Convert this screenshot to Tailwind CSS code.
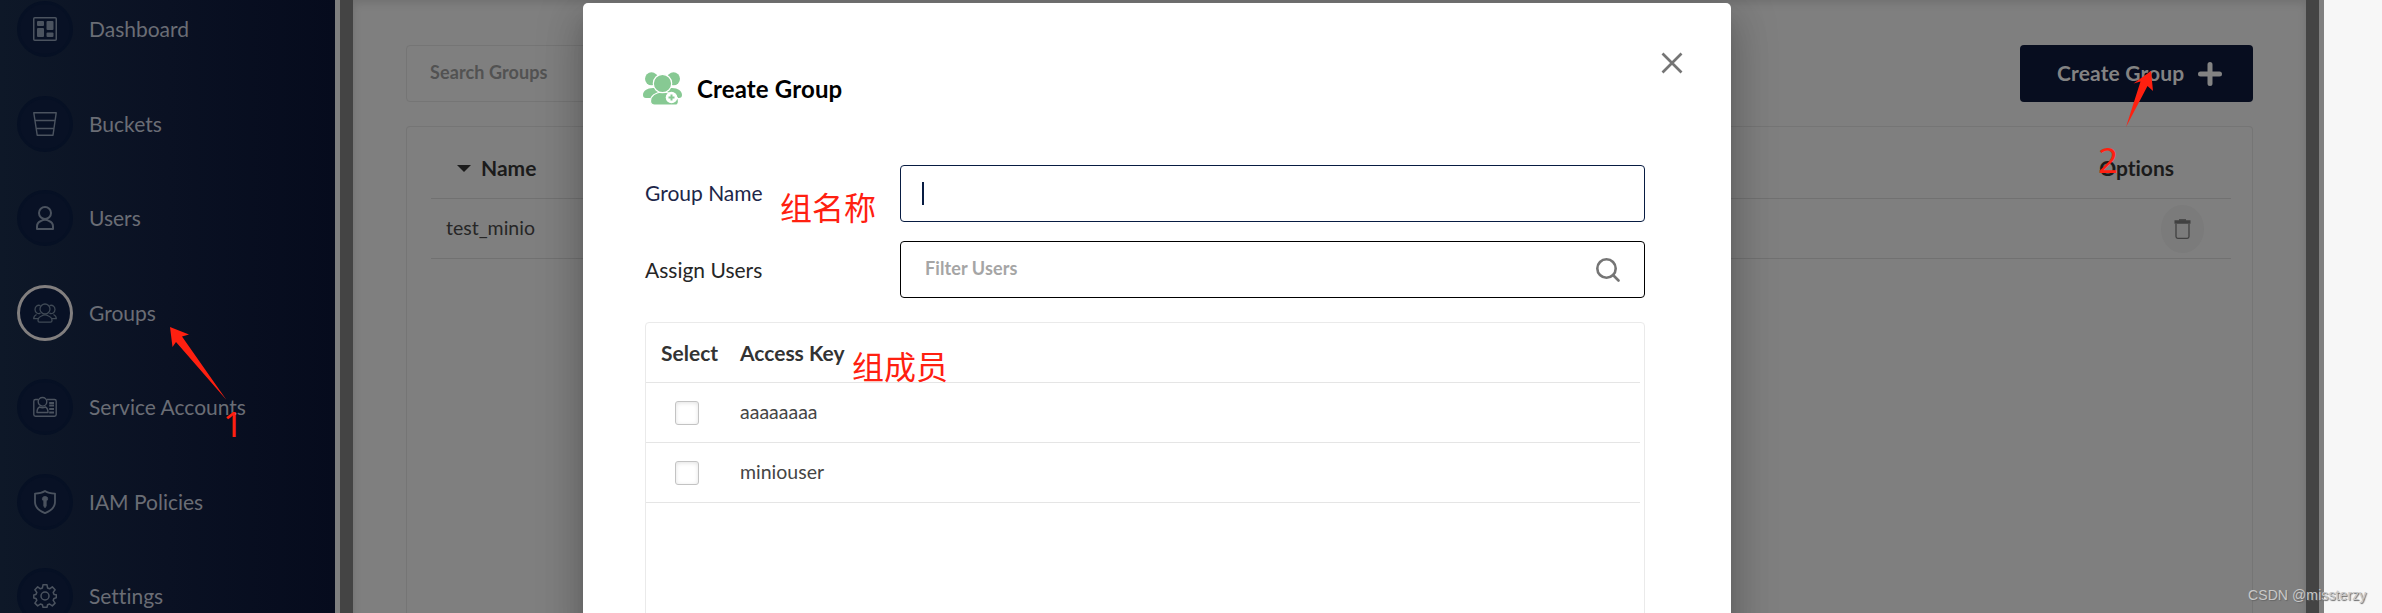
<!DOCTYPE html>
<html lang="en">
<head>
    <meta charset="UTF-8" />
    <title>MinIO Console - Groups</title>
    <script src="https://cdn.jsdelivr.net/npm/@tailwindcss/browser@4"></script>
</head>
<body class="relative flex h-[613px] w-[2382px] overflow-hidden bg-[#f7f7f7] font-['Lato',sans-serif] [font-variant-ligatures:none]">

<!-- Sidebar -->
<nav class="flex w-[335px] shrink-0 flex-col gap-[38.5px] bg-linear-to-r from-[#0e1828] via-[#0a1123] to-[#060b1d] pt-px pl-[17px] text-[21px] text-[#6a6d75]">
    <a class="flex shrink-0 items-center gap-4">
        <span class="flex size-14 items-center justify-center rounded-full border-[3px] border-[#061024] bg-[#081125] text-[#4b535f]">
            <svg class="size-6" viewBox="0 0 24 24" fill="none" stroke="currentColor" stroke-width="1.5">
                <rect x=".75" y=".75" width="22.5" height="22.5" rx="1" />
                <g fill="currentColor" stroke="none">
                    <rect x="4" y="4" width="7" height="5" rx="1" />
                    <rect x="4" y="11" width="7" height="9" rx="1" />
                    <rect x="13.5" y="4" width="7" height="9" rx="1" />
                    <rect x="13.5" y="15.5" width="7" height="4.5" rx="1" />
                </g>
            </svg>
        </span>
        <span>Dashboard</span>
    </a>
    <a class="flex shrink-0 items-center gap-4">
        <span class="flex size-14 items-center justify-center rounded-full border-[3px] border-[#061024] bg-[#081125] text-[#4b535f]">
            <svg class="size-6" viewBox="0 0 24 24" fill="none" stroke="currentColor" stroke-width="1.4" stroke-linejoin="round">
                <path d="M.8.8h22.4L20 23.2H4.2zM2 8.5h20M3 16.5h18" />
            </svg>
        </span>
        <span>Buckets</span>
    </a>
    <a class="flex shrink-0 items-center gap-4">
        <span class="flex size-14 items-center justify-center rounded-full border-[3px] border-[#061024] bg-[#081125] text-[#4b535f]">
            <svg class="size-6" viewBox="0 0 24 24" fill="none" stroke="currentColor" stroke-width="2" stroke-linejoin="round">
                <circle cx="12" cy="7" r="6" />
                <path d="M8 15c-3 1-4 3-4 5.500V23h16v-2.500c0-2.500-1-4.500-4-5.500-2.500-1.500-5.500-1.500-8 0z" />
            </svg>
        </span>
        <span>Users</span>
    </a>
    <a class="flex shrink-0 items-center gap-4">
        <span class="flex size-14 items-center justify-center rounded-full border-[3px] border-[#827f7f] bg-[#081125] text-[#3f4955]">
            <svg class="size-6" viewBox="0 0 24 24" fill="none" stroke="currentColor" stroke-width="1.3" stroke-linejoin="round">
                <circle cx="12" cy="8" r="5" />
                <path d="M8.500 15c-2.500 1-3.500 2.500-3.500 4.500 0 1.200.5 1.700 1.500 1.700h11c1 0 1.500-.5 1.500-1.700 0-2-1-3.500-3.500-4.500-2-1.200-5-1.200-7 0z" />
                <path d="M7.500 4.600C4.500 3.500 2 5.500 2 8.500s3 5 5.500 3.600M16.500 4.600c3-1.100 5.500.9 5.500 3.900s-3 5-5.500 3.600M3.500 13.500C1.500 14.500.7 16 .7 17.700h4.500M20.500 13.500c2 1 2.800 2.500 2.800 4.200h-4.500" />
            </svg>
        </span>
        <span>Groups</span>
    </a>
    <a class="flex shrink-0 items-center gap-4">
        <span class="flex size-14 items-center justify-center rounded-full border-[3px] border-[#061024] bg-[#081125] text-[#4b535f]">
            <svg class="size-6" viewBox="0 0 24 24" fill="none" stroke="currentColor" stroke-width="1.4" stroke-linejoin="round">
                <path d="M5 4.500H2.500C1.500 4.500.8 5.200.8 6.200v13.300c0 1 .7 1.700 1.700 1.700h19c1 0 1.700-.7 1.700-1.700V6.200c0-1-.7-1.700-1.700-1.700H14" />
                <circle cx="9.500" cy="6.800" r="4.300" />
                <path d="M6.500 12C4.500 13 4 14.500 4 17.500h11c0-3-.5-4.500-2.500-5.500-2 1-4 1-6 0z" />
                <path d="M16.200 8H21M16.200 10.500H21M16.200 14H21M16.200 17.500H21" stroke-width="1.900" />
            </svg>
        </span>
        <span>Service Accounts</span>
    </a>
    <a class="flex shrink-0 items-center gap-4">
        <span class="flex size-14 items-center justify-center rounded-full border-[3px] border-[#061024] bg-[#081125] text-[#4b535f]">
            <svg class="size-6" viewBox="0 0 24 24" fill="none" stroke="currentColor" stroke-width="1.800" stroke-linejoin="round">
                <path d="M12 1c3 2 6.500 2.500 10 2.600V12c0 5-4.500 9-10 11.200C6.500 21 2 17 2 12V3.600C5.500 3.500 9 3 12 1z" />
                <path d="M12 6.500a2.400 2.400 0 0 1 1.200 4.600V16L12 17.800 10.800 16v-4.900A2.400 2.400 0 0 1 12 6.500zM13 8.500l1.500-1.500" fill="currentColor" stroke-width=".8" />
            </svg>
        </span>
        <span>IAM Policies</span>
    </a>
    <a class="flex shrink-0 items-center gap-4">
        <span class="flex size-14 items-center justify-center rounded-full border-[3px] border-[#061024] bg-[#081125] text-[#4b535f]">
            <svg class="size-6" viewBox="0 0 24 24" fill="none" stroke="currentColor" stroke-width="1.500" stroke-linejoin="round">
                <circle cx="12" cy="12" r="4" />
                <path d="M10 .8h4l.6 3.200 2 .8 2.700-1.900 2.800 2.800-1.900 2.700.8 2 2.300.4v3l-2.300.6-.8 2 1.900 2.700-2.800 2.800-2.700-1.900-2 .8-.6 2.400h-4l-.6-2.400-2-.8-2.700 1.900-2.800-2.800 1.900-2.700-.8-2-2.200-.5v-3l2.200-.5.8-2-1.900-2.700 2.800-2.800 2.700 1.900 2-.8z" />
            </svg>
        </span>
        <span>Settings</span>
    </a>
</nav>

<!-- Page content -->
<main class="flex w-[1989px] shrink-0 border-x-[5px] border-[#7f7f7f] bg-[#444]">
    <div class="mx-[13px] flex h-[640px] grow flex-col bg-[#7f7f7f] px-[53px] pt-[45px] inset-shadow-[0_3px_8px_rgba(0,0,0,0.12)]">
        <div class="flex h-[57px] shrink-0 justify-between">
            <div class="flex w-[1000px] items-center rounded-[4px] border border-[#757575] pb-[2px] pl-[23px] text-[18px] font-bold tracking-[0.1px] text-[#525252]">Search Groups</div>
            <button class="flex w-[233px] items-center rounded-[4px] bg-[#070d1f] pl-[37px] text-[21px] font-bold tracking-[0.15px] text-[#838383]">
                <span class="w-[141px] pb-px text-left">Create Group</span>
                <svg class="size-6" viewBox="0 0 24 24" stroke="currentColor" stroke-width="5" stroke-linecap="round">
                    <path d="M12 2.500v19M2.500 12h19" />
                </svg>
            </button>
        </div>
        <section class="mt-6 flex grow flex-col rounded-t-[4px] border border-b-0 border-[#757575] pr-[21px] pl-6">
            <div class="flex h-[72px] shrink-0 items-center border-b border-[#717171] pt-[11px] pr-[57px] pl-[26px] text-[21px] font-bold text-[#1b1b1b]">
                <svg class="mr-[10px] h-[7px] w-[14px]" viewBox="0 0 14 7"><path d="M0 0h14L7 7z" fill="currentColor" /></svg>
                <span>Name</span>
                <span class="ml-auto">Options</span>
            </div>
            <div class="flex h-[60px] shrink-0 items-center justify-between border-b border-[#717171] pr-[27px] pl-[15px] text-[19.5px] text-[#262626]">
                <span class="pb-[2px]">test_minio</span>
                <span class="flex h-12 w-[43px] items-center justify-center rounded-[50%] bg-[#7b7b7b] text-[#414141]">
                    <svg class="h-5 w-[17px]" viewBox="0 0 17 20" fill="none" stroke="currentColor" stroke-width="1.300">
                        <path d="M2 5v12.500c0 1 .7 1.800 1.700 1.800h9.600c1 0 1.700-.8 1.700-1.800V5" />
                        <path d="M.5 3h16" stroke-width="3.500" />
                        <path d="M5 1h7" stroke-width="1.600" />
                    </svg>
                </span>
            </div>
        </section>
    </div>
</main>

<!-- Create Group dialog -->
<div class="absolute top-[3px] left-[583px] flex h-[640px] w-[1148px] flex-col rounded-[5px] bg-white pr-[86px] pl-[62px] shadow-[0_11px_15px_-7px_rgba(0,0,0,0.2),0_24px_38px_3px_rgba(0,0,0,0.14),0_9px_46px_8px_rgba(0,0,0,0.12)]">
    <div class="flex h-[162px] shrink-0 items-start">
        <div class="mt-[69px] -ml-[2px] flex h-[33px] items-center gap-[15px] text-2xl font-bold tracking-[0.15px] text-black">
            <svg class="h-[33px] w-[39px] shrink-0" viewBox="0 0 39 33">
                <g fill="#87c993">
                    <circle cx="8.500" cy="6.800" r="6.500" />
                    <circle cx="30.500" cy="6.800" r="6.500" />
                    <path d="M0 23c0-4 4-7 10-7h6v10H3c-2 0-3-1-3-3zM39 23c0-4-4-7-10-7h-6v10h13c2 0 3-1 3-3z" />
                </g>
                <g fill="#87c993" stroke="#fff" stroke-width="1.200">
                    <path d="M7.500 29c0-5 5-9 12-9s16 4 16 9-3 4-5 4H11.500c-2.500 0-4-1-4-4z" />
                    <circle cx="19.500" cy="11.500" r="9.200" />
                </g>
                <circle cx="28.500" cy="25.500" r="5.800" fill="#fff" />
                <path d="M28.500 22.500v6M25.500 25.500h6" stroke="#87c993" stroke-width="2" />
            </svg>
            <span>Create Group</span>
        </div>
        <svg class="mt-[49px] -mr-[38px] ml-auto size-[22px] text-[#757575]" viewBox="0 0 22 22" stroke="currentColor" stroke-width="2.700">
            <path d="M1.500 1.500l19 19M20.500 1.500l-19 19" />
        </svg>
    </div>
    <div class="flex h-[57px] shrink-0 items-center text-[21px] text-[#1d2649]">
        <label class="w-[255px] pb-px">Group Name</label>
        <div class="flex h-full grow items-center rounded-[4px] border border-[#081c42] pl-[21px]">
            <span class="h-[23px] w-[2px] bg-[#081c42]"></span>
        </div>
    </div>
    <div class="mt-[19px] flex h-[57px] shrink-0 items-center text-[21px] text-[#262626]">
        <label class="w-[255px]">Assign Users</label>
        <div class="flex h-full grow items-center justify-between rounded-[4px] border border-black pr-6 pl-6 text-[18px] font-bold tracking-[0.1px] text-[#a5a5a5]">
            <span class="pb-[2px]">Filter Users</span>
            <svg class="size-6 text-[#757575]" viewBox="0 0 24 24" fill="none" stroke="currentColor" stroke-width="2.600" stroke-linecap="round">
                <circle cx="10.500" cy="10.500" r="9.200" />
                <path d="M17.500 17.500l5 5" />
            </svg>
        </div>
    </div>
    <div class="mt-6 flex grow flex-col rounded-[4px] border border-[#eaeaea] pr-[4px] text-[19.5px] text-[#454545]">
        <div class="flex h-[60px] shrink-0 items-center border-b border-[#e5e5e5] pl-[15px] text-[21px] font-bold text-[#333]">
            <span class="w-[79px]">Select</span>
            <span>Access Key</span>
        </div>
        <div class="flex h-[60px] shrink-0 items-center border-b border-[#e5e5e5] pl-[29px]">
            <span class="mr-[41px] size-6 rounded-[3px] border border-[#c3c3c3] inset-shadow-[0_1px_4px_rgba(0,0,0,0.12)]"></span>
            <span class="pb-px">aaaaaaaa</span>
        </div>
        <div class="flex h-[60px] shrink-0 items-center border-b border-[#e5e5e5] pl-[29px]">
            <span class="mr-[41px] size-6 rounded-[3px] border border-[#c3c3c3] inset-shadow-[0_1px_4px_rgba(0,0,0,0.12)]"></span>
            <span class="pb-[2px]">miniouser</span>
        </div>
    </div>
</div>

<!-- Red step markers drawn over the page -->
<svg class="absolute top-0 left-0 h-[613px] w-[2382px]" viewBox="0 0 2382 613" fill="#ff2010">
    <path d="M170 327l19 7.500-7 2 44.500 63.500L176 342l-3.500 5z" />
    <path d="M2151 71l2 20-5.500-5-21.500 41 14.500-45.500-7 2z" />
</svg>
<div class="font-['Noto_Sans_CJK_SC',sans-serif] text-[32px] leading-8 text-[#ff2010]">
    <span class="absolute top-[190px] left-[780px]">组名称</span>
    <span class="absolute top-[349px] left-[852px]">组成员</span>
    <span class="absolute top-[408px] left-[223px] font-['Noto_Sans',sans-serif] text-[35px]">1</span>
    <span class="absolute top-[144px] left-[2098px] font-['Noto_Sans',sans-serif] text-[35px]">2</span>
</div>
<span class="absolute top-[587px] left-[2248px] font-['Liberation_Sans',sans-serif] text-[14px] leading-4 tracking-[0.1px] whitespace-nowrap text-[#c8c8c8] [text-shadow:1px_1px_1px_#666]">CSDN @missterzy</span>

</body>
</html>
